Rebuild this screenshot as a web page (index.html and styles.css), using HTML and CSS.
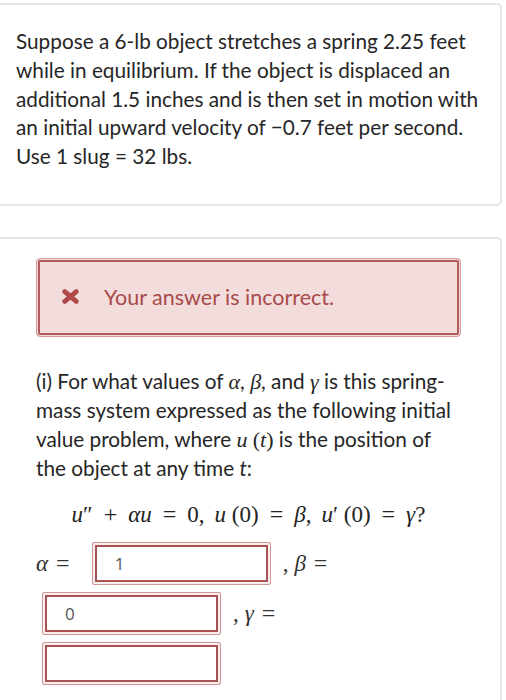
FILE: index.html
```html
<!DOCTYPE html>
<html>
<head>
<meta charset="utf-8">
<link rel="stylesheet" href="styles.css">
</head>
<body>
<div class="page">
  <div class="card card-question">
    <p class="lead">Suppose a 6-lb object stretches a spring 2.25 feet while in equilibrium. If the object is displaced an additional 1.5 inches and is then set in motion with an initial upward velocity of −0.7 feet per second. Use 1 slug = 32 lbs.</p>
  </div>
  <div class="card card-answer">
    <div class="alert">
      <svg class="x-icon" width="17" height="15" viewBox="0 0 17 15"><path d="M2.8 2.6 L14.2 12.4 M14.2 2.6 L2.8 12.4" stroke="#b04a4a" stroke-width="4.8" stroke-linecap="round" fill="none"/></svg>
      <span class="alert-text">Your answer is incorrect.</span>
    </div>
    <p class="part">(i) For what values of <span class="m">α</span>, <span class="m">β</span>, and <span class="m">γ</span> is this spring-mass system expressed as the following initial value problem, where <span class="m">u</span> <span class="mr">(</span><span class="m">t</span><span class="mr">)</span> is the position of the object at any time <i>t</i>:</p>
    <div class="eq"><span class="m">u</span><span class="mr">″</span><span class="op">+</span><span class="m">αu</span><span class="op">=</span><span class="mr">0,</span><span class="sp"></span><span class="m">u</span><span class="mr">&nbsp;(0)</span><span class="op">=</span><span class="m">β</span><span class="mr">,</span><span class="sp"></span><span class="m">u</span><span class="mr">′&nbsp;(0)</span><span class="op">=</span><span class="m">γ</span><span class="mr">?</span></div>
    <div class="answers">
      <div class="row">
        <span class="lbl"><span class="m">α</span><span class="op">=</span></span>
        <div class="inp first">1</div>
        <span class="lbl"><span class="mr">,</span><span class="m">β</span><span class="op">=</span></span>
      </div>
      <div class="row">
        <div class="inp">0</div>
        <span class="lbl"><span class="mr">,</span><span class="m">γ</span><span class="op">=</span></span>
      </div>
      <div class="row">
        <div class="inp"></div>
      </div>
    </div>
  </div>
</div>
</body>
</html>
```
FILE: styles.css
```css
html, body {
  margin: 0;
  padding: 0;
  background: #ffffff;
}
body {
  font-family: Lato, "Open Sans", sans-serif;
  color: #262626;
  width: 506px;
  height: 700px;
  overflow: hidden;
}
.page {
  display: flex;
  flex-direction: column;
  padding-top: 3px;
  gap: 31px;
}
.card {
  margin-left: -6px;
  width: 508px;
  box-sizing: border-box;
  border: 2px solid #e6e6e6;
  border-radius: 5px;
  background: #fff;
  flex-shrink: 0;
}
.card-question {
  padding: 22px 12px 33px 20px;
}
.lead {
  margin: 0;
  font-size: 20.75px;
  line-height: 28.75px;
}
.card-answer {
  padding: 19px 34px 20px 40px;
  height: 470px;
}
.alert {
  box-sizing: border-box;
  width: 425px;
  height: 79px;
  border: 1px solid #d89a9a;
  border-radius: 4px;
  background: #f3dcdc;
  box-shadow: inset 0 0 0 1px #f3dcdc, inset 0 0 0 3px #b35a5a;
  display: flex;
  align-items: center;
  padding-left: 25px;
}
.x-icon {
  display: block;
  margin-right: 25px;
  margin-top: -1px;
}
.alert-text {
  font-size: 21.5px;
  color: #a84a4a;
}
.part {
  margin: 30px 0 0 0;
  width: 425px;
  font-size: 20.75px;
  line-height: 29px;
}
.m {
  font-family: "Liberation Serif", "DejaVu Serif", serif;
  font-style: italic;
  font-size: 23px;
}
.mr {
  font-family: "Liberation Serif", "DejaVu Serif", serif;
  font-size: 23px;
}
.part .m, .part .mr {
  font-size: 22px;
}
.eq {
  margin-top: 16px;
  width: 425px;
  height: 30px;
  line-height: 30px;
  display: flex;
  justify-content: center;
  align-items: baseline;
  color: #222;
}
.op {
  font-family: "Liberation Serif", "DejaVu Serif", serif;
  font-size: 24px;
  padding: 0 11px;
}
.sp {
  display: inline-block;
  width: 10px;
}
.answers {
  margin-top: 10px;
}
.row {
  height: 50px;
  display: flex;
  align-items: center;
}
.lbl {
  display: inline-flex;
  align-items: baseline;
  color: #333;
  margin-left: 12px;
  flex-shrink: 0;
}
.row .lbl:first-child {
  margin-left: 0;
}
.lbl .op {
  padding: 0 0 0 8px;
}
.lbl .mr + .m {
  margin-left: 6px;
}
.inp {
  flex-shrink: 0;
  box-sizing: border-box;
  width: 179px;
  height: 43px;
  margin-left: 6px;
  border: 1px solid #cf9696;
  border-radius: 2px;
  background: #fff;
  box-shadow: inset 0 0 0 2px #fbeeee, inset 0 0 0 4px #a85252;
  font-family: "Open Sans", "Noto Sans", sans-serif;
  font-size: 17px;
  color: #555;
  display: flex;
  align-items: center;
  padding-left: 22px;
}
.inp.first {
  margin-left: 22px;
}
```
